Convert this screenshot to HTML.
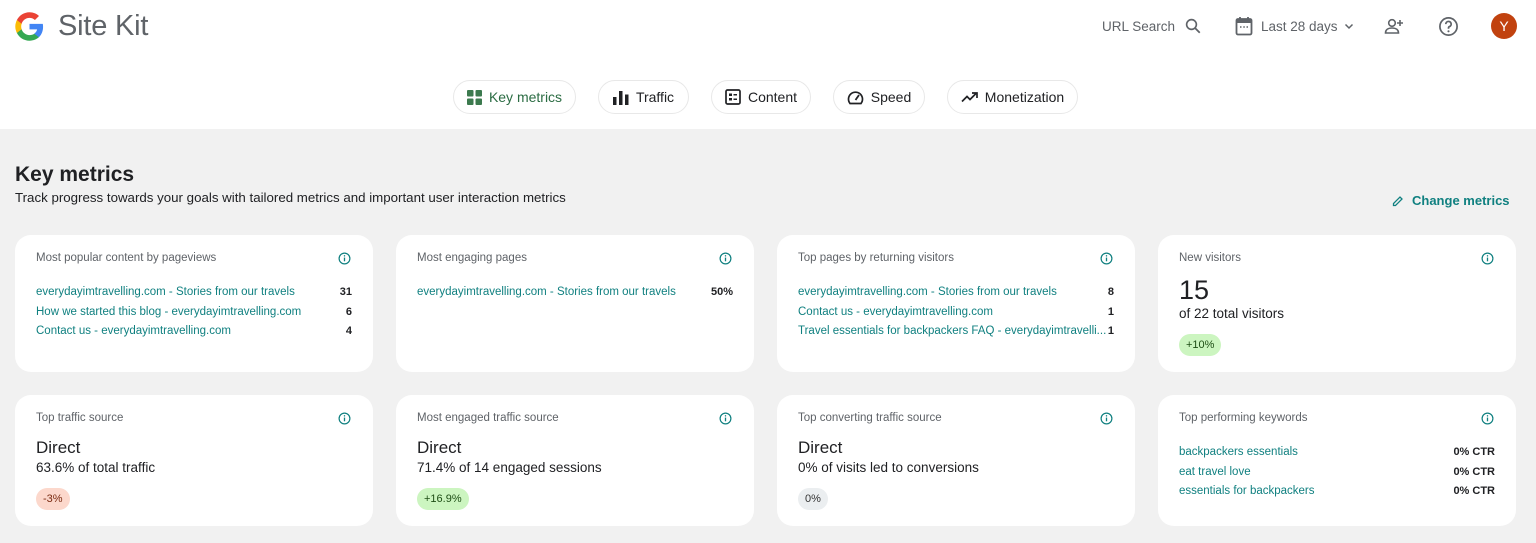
<!DOCTYPE html>
<html><head><meta charset="utf-8"><style>
*{box-sizing:border-box;margin:0;padding:0}
body{width:1536px;height:543px;overflow:hidden;background:#f1f1f1;font-family:"Liberation Sans",sans-serif;color:#202124;position:relative}
.top{position:absolute;left:0;top:0;width:1536px;height:129px;background:#fff}
.logo{position:absolute;left:14px;top:10px;display:flex;align-items:center}
.logo span{font-size:29px;color:#5f6368;margin-left:13px;letter-spacing:-0.2px}
.hr{position:absolute;top:0;height:52px;display:flex;align-items:center;color:#5f6368;font-size:13.5px}
.tabs{position:absolute;top:80px;left:0;width:1536px;height:34px}
.tab{position:absolute;top:0;height:34px;border:1px solid #e8e8e8;border-radius:17px;display:flex;align-items:center;justify-content:center;font-size:14px;color:#202124;gap:7px}
h1{position:absolute;left:15px;top:163px;font-size:21px;font-weight:bold;color:#202124}
.sub{position:absolute;left:15px;top:190px;font-size:13.3px;color:#202124}
.chg{position:absolute;left:1392px;top:193px;font-size:13px;color:#108080;font-weight:bold;display:flex;gap:8px;align-items:center}
.card{position:absolute;width:358px;background:#fff;border-radius:16px;padding:0 21px}
.ct{position:absolute;left:21px;top:17px;font-size:11.5px;color:#5f6368}
.info{position:absolute;right:22px;top:17px}
.rows{position:absolute;left:21px;right:21px;top:51px;font-size:11.5px}
.row{display:flex;justify-content:space-between;height:19.5px;color:#108080}
.row b{color:#202124;font-weight:bold;font-size:11px}
.big{position:absolute;left:21px;top:43px;font-size:17px;color:#202124}
.big2{position:absolute;left:21px;top:65px;font-size:13.5px;color:#202124}
.pill{position:absolute;left:21px;top:93px;height:22px;border-radius:11px;padding:0 7px;font-size:11px;display:flex;align-items:center}
</style></head><body>
<div class="top"></div>
<div class="logo"><svg width="31" height="31" viewBox="0 0 48 48"><path fill="#4285F4" d="M45 24.5c0-1.6-.1-3.1-.4-4.5H24v8.5h11.8c-.5 2.7-2.1 5-4.4 6.6v5.5h7.1C42.6 36.8 45 31.2 45 24.5z"/><path fill="#34A853" d="M24 46c5.9 0 10.900-2 14.5-5.3l-7.1-5.5c-2 1.3-4.5 2.1-7.4 2.1-5.7 0-10.5-3.8-12.2-9H4.5v5.700C8.1 41.1 15.5 46 24 46z"/><path fill="#FBBC05" d="M11.8 28.3c-.4-1.3-.7-2.8-.7-4.3s.3-3 .7-4.3V14H4.5C3 17 2 20.4 2 24s1 7 2.5 10l7.3-5.7z"/><path fill="#EA4335" d="M24 10.7c3.2 0 6.1 1.1 8.4 3.3l6.3-6.3C34.9 4.2 29.9 2 24 2 15.5 2 8.1 6.9 4.5 14l7.3 5.7c1.7-5.2 6.5-9 12.2-9z"/></svg><span>Site Kit</span></div>
<div class="hr" style="left:1102px">URL Search<svg style="margin-left:9px" width="18" height="18" viewBox="0 0 24 24"><circle cx="10" cy="10" r="6.5" fill="none" stroke="#5f6368" stroke-width="2.2"/><path d="M15 15l6 6" stroke="#5f6368" stroke-width="2.4"/></svg></div>
<div class="hr" style="left:1235px"><svg width="18" height="20" viewBox="0 0 18 20"><rect x="1.5" y="3" width="15" height="15.5" rx="1.5" fill="none" stroke="#5f6368" stroke-width="1.8"/><rect x="1.5" y="3" width="15" height="4" fill="#5f6368"/><path d="M5 1v4M13 1v4" stroke="#5f6368" stroke-width="1.8"/><path d="M5 11h1.5M8.3 11h1.5M11.5 11H13" stroke="#5f6368" stroke-width="1.5"/></svg><span style="margin-left:8px">Last 28 days</span><svg style="margin-left:6px" width="10" height="8" viewBox="0 0 10 8"><path d="M1.5 2.5l3.5 3.5 3.5-3.5" fill="none" stroke="#5f6368" stroke-width="1.5"/></svg></div>
<div class="hr" style="left:1384px"><svg width="20" height="18" viewBox="0 0 20 18"><circle cx="8" cy="6" r="3.3" fill="none" stroke="#5f6368" stroke-width="1.6"/><path d="M1.5 16c0-3.5 3-5 6.5-5s6.5 1.5 6.5 5z" fill="none" stroke="#5f6368" stroke-width="1.6"/><path d="M16 3v6M13 6h6" stroke="#5f6368" stroke-width="1.6"/></svg></div>
<div class="hr" style="left:1438px"><svg width="21" height="21" viewBox="0 0 22 22"><circle cx="11" cy="11" r="9" fill="none" stroke="#5f6368" stroke-width="1.8"/><path d="M8.2 8.5a2.8 2.8 0 1 1 3.8 2.6c-.7.3-1 .8-1 1.6v.6" fill="none" stroke="#5f6368" stroke-width="1.8"/><circle cx="11" cy="16" r="1.1" fill="#5f6368"/></svg></div>
<div class="hr" style="left:1491px"><div style="width:26px;height:26px;border-radius:13px;background:#c1420f;color:#fff;font-size:14px;display:flex;align-items:center;justify-content:center">Y</div></div>
<div class="tabs">
<div class="tab" style="left:453px;width:123px;color:#2b6c43"><svg width="15" height="15" viewBox="0 0 15 15" fill="#3c7a4e"><rect x="0" y="0" width="6.5" height="6.5" rx="1"/><rect x="8.5" y="0" width="6.5" height="6.5" rx="1"/><rect x="0" y="8.5" width="6.5" height="6.5" rx="1"/><rect x="8.5" y="8.5" width="6.5" height="6.5" rx="1"/></svg>Key metrics</div>
<div class="tab" style="left:598px;width:91px"><svg width="16" height="15" viewBox="0 0 16 15" fill="#202124"><rect x="0" y="7" width="3.5" height="8"/><rect x="6" y="1" width="3.5" height="14"/><rect x="12" y="4.5" width="3.5" height="10.5"/></svg>Traffic</div>
<div class="tab" style="left:711px;width:100px"><svg width="16" height="16" viewBox="0 0 16 16"><rect x="1" y="1" width="14" height="14" rx="1.5" fill="none" stroke="#202124" stroke-width="1.7"/><rect x="4" y="4.5" width="3" height="2.5" fill="#202124"/><rect x="4" y="9" width="3" height="2.5" fill="#202124"/><path d="M8.5 5.7h3.5M8.5 10.2h3.5" stroke="#202124" stroke-width="1.5"/></svg>Content</div>
<div class="tab" style="left:833px;width:92px"><svg width="17" height="15" viewBox="0 0 17 15"><path d="M3 13.5A7 7 0 1 1 14 13.5z" fill="none" stroke="#202124" stroke-width="1.7"/><path d="M8.5 10L12 5" stroke="#202124" stroke-width="1.8"/></svg>Speed</div>
<div class="tab" style="left:947px;width:131px"><svg width="17" height="11" viewBox="0 0 17 11"><path d="M1 9.5l5-5 3 3 6-6" fill="none" stroke="#202124" stroke-width="1.7"/><path d="M11 1h5v5" fill="none" stroke="#202124" stroke-width="1.7"/></svg>Monetization</div>
</div>
<h1>Key metrics</h1>
<div class="sub">Track progress towards your goals with tailored metrics and important user interaction metrics</div>
<div class="chg"><svg width="12" height="12" viewBox="0 0 12 12"><path d="M1.5 10.5v-2l6.5-6.5 2 2-6.5 6.5z" fill="none" stroke="#108080" stroke-width="1.3"/></svg>Change metrics</div>

<div class="card" style="left:15px;top:235px;height:137px"><div class="ct">Most popular content by pageviews</div><svg class="info" width="13" height="13" viewBox="0 0 14 14"><circle cx="7" cy="7" r="5.8" fill="none" stroke="#108080" stroke-width="1.3"/><path d="M7 6v4" stroke="#108080" stroke-width="1.4"/><circle cx="7" cy="4.2" r=".8" fill="#108080"/></svg>
<div class="rows"><div class="row">everydayimtravelling.com - Stories from our travels<b>31</b></div><div class="row">How we started this blog - everydayimtravelling.com<b>6</b></div><div class="row">Contact us - everydayimtravelling.com<b>4</b></div></div></div>
<div class="card" style="left:396px;top:235px;height:137px"><div class="ct">Most engaging pages</div><svg class="info" width="13" height="13" viewBox="0 0 14 14"><circle cx="7" cy="7" r="5.8" fill="none" stroke="#108080" stroke-width="1.3"/><path d="M7 6v4" stroke="#108080" stroke-width="1.4"/><circle cx="7" cy="4.2" r=".8" fill="#108080"/></svg>
<div class="rows"><div class="row">everydayimtravelling.com - Stories from our travels<b>50%</b></div></div></div>
<div class="card" style="left:777px;top:235px;height:137px"><div class="ct">Top pages by returning visitors</div><svg class="info" width="13" height="13" viewBox="0 0 14 14"><circle cx="7" cy="7" r="5.8" fill="none" stroke="#108080" stroke-width="1.3"/><path d="M7 6v4" stroke="#108080" stroke-width="1.4"/><circle cx="7" cy="4.2" r=".8" fill="#108080"/></svg>
<div class="rows"><div class="row">everydayimtravelling.com - Stories from our travels<b>8</b></div><div class="row">Contact us - everydayimtravelling.com<b>1</b></div><div class="row">Travel essentials for backpackers FAQ - everydayimtravelli...<b>1</b></div></div></div>
<div class="card" style="left:1158px;top:235px;height:137px"><div class="ct">New visitors</div><svg class="info" width="13" height="13" viewBox="0 0 14 14"><circle cx="7" cy="7" r="5.8" fill="none" stroke="#108080" stroke-width="1.3"/><path d="M7 6v4" stroke="#108080" stroke-width="1.4"/><circle cx="7" cy="4.2" r=".8" fill="#108080"/></svg>
<div class="big" style="top:40px;font-size:27px">15</div><div class="big2" style="top:71px">of 22 total visitors</div><div class="pill" style="top:99px;background:#ccf5c0;color:#1d4d14">+10%</div></div>

<div class="card" style="left:15px;top:395px;height:131px"><div class="ct">Top traffic source</div><svg class="info" width="13" height="13" viewBox="0 0 14 14"><circle cx="7" cy="7" r="5.8" fill="none" stroke="#108080" stroke-width="1.3"/><path d="M7 6v4" stroke="#108080" stroke-width="1.4"/><circle cx="7" cy="4.2" r=".8" fill="#108080"/></svg>
<div class="big">Direct</div><div class="big2">63.6% of total traffic</div><div class="pill" style="background:#fcd8cc;color:#7a2a10">-3%</div></div>
<div class="card" style="left:396px;top:395px;height:131px"><div class="ct">Most engaged traffic source</div><svg class="info" width="13" height="13" viewBox="0 0 14 14"><circle cx="7" cy="7" r="5.8" fill="none" stroke="#108080" stroke-width="1.3"/><path d="M7 6v4" stroke="#108080" stroke-width="1.4"/><circle cx="7" cy="4.2" r=".8" fill="#108080"/></svg>
<div class="big">Direct</div><div class="big2">71.4% of 14 engaged sessions</div><div class="pill" style="background:#ccf5c0;color:#1d4d14">+16.9%</div></div>
<div class="card" style="left:777px;top:395px;height:131px"><div class="ct">Top converting traffic source</div><svg class="info" width="13" height="13" viewBox="0 0 14 14"><circle cx="7" cy="7" r="5.8" fill="none" stroke="#108080" stroke-width="1.3"/><path d="M7 6v4" stroke="#108080" stroke-width="1.4"/><circle cx="7" cy="4.2" r=".8" fill="#108080"/></svg>
<div class="big">Direct</div><div class="big2">0% of visits led to conversions</div><div class="pill" style="background:#ebeef0;color:#333">0%</div></div>
<div class="card" style="left:1158px;top:395px;height:131px"><div class="ct">Top performing keywords</div><svg class="info" width="13" height="13" viewBox="0 0 14 14"><circle cx="7" cy="7" r="5.8" fill="none" stroke="#108080" stroke-width="1.3"/><path d="M7 6v4" stroke="#108080" stroke-width="1.4"/><circle cx="7" cy="4.2" r=".8" fill="#108080"/></svg>
<div class="rows"><div class="row">backpackers essentials<b>0% CTR</b></div><div class="row">eat travel love<b>0% CTR</b></div><div class="row">essentials for backpackers<b>0% CTR</b></div></div></div>
</body></html>
